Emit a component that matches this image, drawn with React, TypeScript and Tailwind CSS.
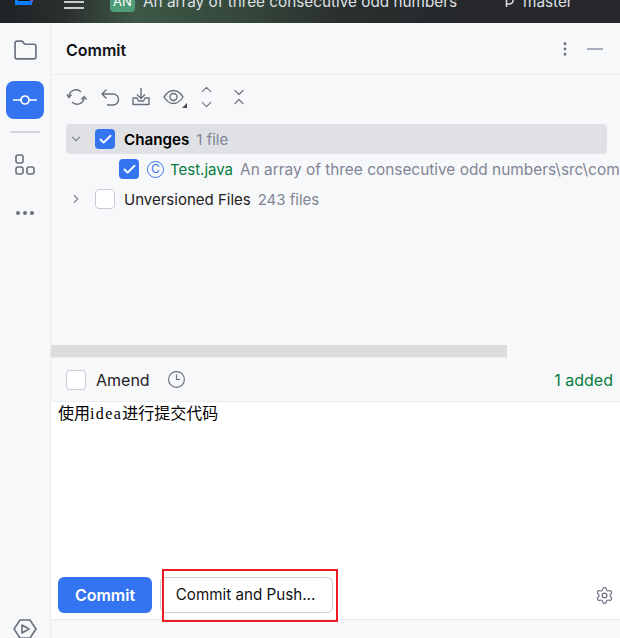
import { Check, ChevronDown, ChevronRight, ChevronUp, ChevronsDownUp, Clock3, EllipsisVertical, Ellipsis, Folder, Settings } from 'lucide-react';

const ui = "font-['Inter','Noto_Sans_CJK_SC',sans-serif]";

function CheckBox({ checked }: { checked?: boolean }) {
  return checked ? (
    <span className="flex size-5 shrink-0 items-center justify-center rounded-[4px] bg-[#3574f0]">
      <Check size={15} strokeWidth={3} className="text-white" />
    </span>
  ) : (
    <span className="block size-5 shrink-0 rounded-[4px] border border-[#c9ccd6] bg-white" />
  );
}

function TitleBar() {
  return (
    <div className="flex h-[23px] shrink-0 items-end overflow-hidden bg-[linear-gradient(90deg,#1f2226_0%,#2a2e2d_10%,#3d5846_22%,#34463a_40%,#2a2f2e_55%,#26282c_75%,#26282c_100%)]">
      <div className="flex h-[42px] shrink-0 items-center text-[15.3px] text-[#dfe1e5]">
        <svg className="ml-[15px] -mt-[4px]" width="21" height="10" viewBox="0 0 21 10">
          <rect width="17" height="10" fill="#087cfa" />
          <path d="M16 0h5l-4 8h-1z" fill="#7b4fd6" />
          <rect x="3" width="12" height="6" fill="#111" />
          <rect x="5" y="2" width="7" height="2" fill="#fff" />
        </svg>
        <span className="ml-[28px] flex w-5 flex-col gap-[4px]">
          <span className="h-[2px] bg-[#c9ccd0]" />
          <span className="h-[2px] bg-[#c9ccd0]" />
          <span className="h-[2px] bg-[#c9ccd0]" />
        </span>
        <span className="ml-[26px] flex h-[20px] w-[25px] items-center justify-center rounded-[4px] bg-[#4f9c78] text-[13px] text-white">AN</span>
        <span className="ml-2 w-[321px] whitespace-nowrap">An array of three consecutive odd numbers</span>
        <ChevronDown size={12} className="-mt-[8px] text-[#9da0a8]" />
        <svg className="ml-[29px] -mt-[4px]" width="10" height="14" viewBox="0 0 10 14" fill="none" stroke="#dfe1e5" strokeWidth="1.5">
          <path d="M1.500 14V1M1.500 11h3A3.500 3.500 0 0 0 8 7.500V1" />
        </svg>
        <span className="ml-[8px] w-[61px]">master</span>
        <ChevronDown size={12} className="-mt-[8px] text-[#9da0a8]" />
      </div>
    </div>
  );
}

function Sidebar() {
  return (
    <div className="flex w-[51px] shrink-0 flex-col items-center border-r border-[#ebecf0] bg-[#f7f8fa]">
      <Folder size={25} strokeWidth={1.6} className="mt-[15px] text-[#6c707e]" />
      <div className="mt-[18px] flex size-[38px] items-center justify-center rounded-[8px] bg-[#3574f0]">
        <svg width="26" height="12" viewBox="0 0 26 12" fill="none" stroke="white" strokeWidth="1.7">
          <circle cx="13" cy="6" r="4" />
          <path d="M1 6h8M17 6h8" />
        </svg>
      </div>
      <div className="mt-[12px] h-[2px] w-[30px] bg-[#d3d5db]" />
      <svg className="mt-[21px]" width="22" height="22" viewBox="0 0 22 22" fill="none" stroke="#6c707e" strokeWidth="1.6">
        <rect x="2" y="1" width="7" height="8" rx="2" />
        <rect x="2" y="13" width="7" height="7" rx="2" />
        <rect x="13" y="13" width="7" height="7" rx="2" />
      </svg>
      <Ellipsis size={24} className="mt-[25px] text-[#6c707e]" />
      <svg className="mt-auto mb-[-2px]" width="26" height="22" viewBox="0 0 26 22" fill="none" stroke="#6c707e" strokeWidth="1.6">
        <path d="M8 2h10l6 9-6 9H8L2 11z" strokeLinejoin="round" />
        <path d="M10 7l7 4-7 4z" strokeLinejoin="round" />
      </svg>
    </div>
  );
}

function Toolbar() {
  return (
    <div className="flex h-[44px] items-center text-[#6c707e]">
      <svg className="ml-[15px]" width="21" height="18" viewBox="0 0 21 18" fill="none" stroke="currentColor" strokeWidth="1.4">
        <path d="M3 9a7 7 0 0 1 12-5M18 9a7 7 0 0 1-12 5" />
        <path d="M1 6.500l2 3 2.500-3M15.500 11.500l2.500-3 2.500 3" />
      </svg>
      <svg className="ml-[13px]" width="20" height="19" viewBox="0 0 20 19" fill="none" stroke="currentColor" strokeWidth="1.4">
        <path d="M6.500 1.500L2 6l4.500 4.500M2 6h11a5 5 0 0 1 0 11H7" />
      </svg>
      <svg className="ml-[11px]" width="20" height="20" viewBox="0 0 20 20" fill="none" stroke="currentColor" strokeWidth="1.4">
        <path d="M10 1v10M6 7.500l4 4 4-4" />
        <path d="M2 11h4l1.500 3h5L14 11h4v6.500H2z" strokeLinejoin="round" />
      </svg>
      <span className="relative ml-[12px] flex w-[22px]">
        <svg width="21" height="16" viewBox="0 0 21 16" fill="none" stroke="currentColor" strokeWidth="1.4">
          <path d="M1 8c2.500-4 5.500-6.500 9.500-6.500S17.500 4 20 8c-2.500 4-5.500 6.500-9.500 6.500S3.500 12 1 8z" />
          <circle cx="10.500" cy="8" r="3.500" />
        </svg>
        <span className="absolute -right-[2px] bottom-[-3px] size-0 border-b-[5px] border-l-[5px] border-b-[#494b57] border-l-transparent" />
      </span>
      <span className="ml-[12px] flex w-[18px] flex-col items-center">
        <ChevronUp size={17} strokeWidth={1.5} className="-mb-[2px]" />
        <ChevronDown size={17} strokeWidth={1.5} />
      </span>
      <ChevronsDownUp size={20} strokeWidth={1.4} className="ml-[14px]" />
    </div>
  );
}

function ChangesTree() {
  return (
    <div className="flex flex-col px-[15px] text-[15px]">
      <div className="flex h-[30px] w-[541px] items-center rounded-[4px] bg-[#dfe1e5]">
        <ChevronDown size={14} className="ml-[3px] text-[#818594]" />
        <span className="ml-[12px]"><CheckBox checked /></span>
        <span className="ml-[9px] pt-[2px] text-[15.2px] font-semibold text-black">Changes</span>
        <span className="ml-[7px] pt-[2px] text-[#818594]">1 file</span>
      </div>
      <div className="flex h-[30px] items-center whitespace-nowrap">
        <span className="ml-[53px]"><CheckBox checked /></span>
        <span className="ml-2 flex size-[17px] shrink-0 items-center justify-center rounded-full border border-[#3574f0] text-[12px] leading-none text-[#3574f0]">C</span>
        <span className="ml-[6px] pt-[2px] text-[#067d3f]">Test.java</span>
        <span className="ml-[7px] pt-[2px] text-[15.4px] text-[#818594]">An array of three consecutive odd numbers\src\com</span>
      </div>
      <div className="flex h-[30px] items-center">
        <ChevronRight size={14} className="ml-[3px] text-[#818594]" />
        <span className="ml-[12px]"><CheckBox /></span>
        <span className="ml-[9px] pt-[2px] text-[#1f2024]">Unversioned Files</span>
        <span className="ml-[7px] pt-[2px] text-[#818594]">243 files</span>
      </div>
    </div>
  );
}

export default function App() {
  return (
    <div className={`flex h-[638px] w-[620px] flex-col overflow-hidden bg-[#f7f8fa] ${ui}`}>
      <TitleBar />
      <div className="flex min-h-0 flex-1">
        <Sidebar />
        <div className="flex min-w-0 flex-1 flex-col">
          <div className="flex h-[52px] shrink-0 items-center justify-between border-b border-[#ebecf0] pl-[15px] pr-[17px] pt-[3px]">
            <span className="text-[16px] font-semibold text-[#111214]">Commit</span>
            <div className="-mt-[2px] flex items-center gap-[13px] text-[#6c707e]">
              <EllipsisVertical size={18} strokeWidth={1.8} />
              <span className="h-[2px] w-4 bg-[#a8adbd]" />
            </div>
          </div>
          <div className="min-h-0 flex-1 overflow-hidden">
            <Toolbar />
            <div className="mt-[5px]"><ChangesTree /></div>
          </div>
          <div className="h-[13px] w-[456px] shrink-0 border-b border-[#e9eaee] bg-[#dcdcde]" />
          <div className="flex h-[43px] shrink-0 items-center pl-[15px] pr-[7px] text-[16px]">
            <CheckBox />
            <span className="ml-[10px] text-[#1f2024]">Amend</span>
            <Clock3 size={19} strokeWidth={1.5} className="ml-[17px] text-[#6c707e]" />
            <span className="ml-auto text-[#067d3f]">1 added</span>
          </div>
          <div className="flex h-[219px] shrink-0 flex-col border-y border-[#ebecf0] bg-white">
            <p className="pl-[7px] pt-[1px] font-['Liberation_Serif','Noto_Sans_CJK_SC',serif] text-[16px] leading-[22px] text-black">
              使用<span className="tracking-[1.4px]">idea</span>进行提交代码
            </p>
            <div className="mt-auto flex items-center pb-[6px] pl-[7px] pr-[6px]">
              <button className="h-[36px] w-[94px] rounded-[6px] bg-[#3574f0] text-[16px] font-semibold text-white">Commit</button>
              <div className="relative ml-2">
                <button className="h-[36px] w-[173px] rounded-[6px] border border-[#c9ccd6] bg-white pr-[2px] text-[15.2px] text-[#111214]">Commit and Push...</button>
                <span className="absolute left-[2px] -top-[8px] h-[53px] w-[176px] border-2 border-[#ed1c24]" />
              </div>
              <Settings size={19} strokeWidth={1.5} className="ml-auto text-[#6c707e]" />
            </div>
          </div>
          <div className="h-[18px] shrink-0" />
        </div>
      </div>
    </div>
  );
}
